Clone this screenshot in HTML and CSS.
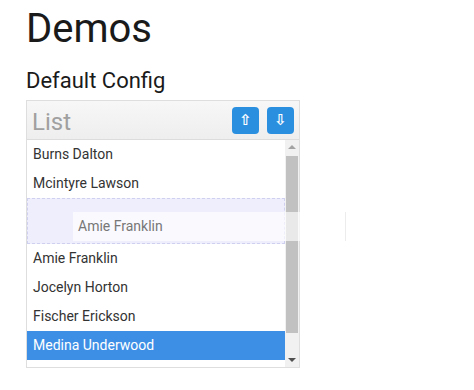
FILE: index.html
```html
<!DOCTYPE html>
<html>
<head>
<meta charset="utf-8">
<link rel="stylesheet" href="styles.css">
</head>
<body>
<h1 class="title">Demos</h1>
<h3 class="subtitle">Default Config</h3>
<div class="card">
  <div class="card-head">
    <span class="card-title">List</span>
    <div class="btns">
      <button class="btn">&#8679;</button>
      <button class="btn">&#8681;</button>
    </div>
  </div>
  <div class="card-body">
    <ul class="list">
      <li class="item">Burns Dalton</li>
      <li class="item">Mcintyre Lawson</li>
      <li class="placeholder"></li>
      <li class="item">Amie Franklin</li>
      <li class="item">Jocelyn Horton</li>
      <li class="item">Fischer Erickson</li>
      <li class="item selected">Medina Underwood</li>
    </ul>
    <div class="scrollbar">
      <div class="arrow up"></div>
      <div class="track"><div class="thumb"></div></div>
      <div class="arrow down"></div>
    </div>
  </div>
  <div class="ghost">Amie Franklin</div>
</div>
</body>
</html>
```
FILE: styles.css
```css
html, body { margin: 0; padding: 0; background: #fff; }
body {
  font-family: Roboto, "Liberation Sans", sans-serif;
  color: #222;
  padding: 0 0 0 26px;
}
.title {
  font-size: 40px;
  font-weight: 400;
  line-height: 50px;
  margin: 4px 0 0 0;
  color: #1a1a1a;
}
.subtitle {
  font-size: 22px;
  font-weight: 400;
  line-height: 28px;
  margin: 13px 0 0 0;
  color: #1a1a1a;
}
.card {
  position: relative;
  width: 272px;
  height: 266px;
  margin-top: 5px;
  border: 1px solid #dedede;
  display: flex;
  flex-direction: column;
}
.card-head {
  height: 38px;
  border-bottom: 1px solid #dcdcdc;
  background: linear-gradient(#f7f7f7, #eeeeee);
  display: flex;
  align-items: center;
  justify-content: space-between;
  padding: 0 5px 0 5px;
}
.card-title {
  font-size: 24px;
  color: #a0a0a0;
  line-height: 28px;
  margin-top: 4px;
}
.btns { display: flex; gap: 8px; }
.btn {
  width: 27px;
  height: 27px;
  border: 0;
  border-radius: 4px;
  background: #2b8fe0;
  color: #fff;
  font-family: "DejaVu Sans", sans-serif;
  font-size: 15px;
  font-weight: bold;
  padding: 0;
  display: flex;
  align-items: center;
  justify-content: center;
}
.card-body {
  flex: 1;
  display: flex;
  overflow: hidden;
}
.list {
  flex: 1;
  list-style: none;
  margin: 0;
  padding: 0;
  overflow: hidden;
}
.item {
  height: 29px;
  line-height: 29px;
  padding-left: 6px;
  font-size: 14px;
  color: #333;
  white-space: nowrap;
}
.item.selected {
  background: #3d8fe6;
  color: #fff;
}
.placeholder {
  height: 44px;
  border: 1px dashed #cfcfef;
  background: #eeeefc;
}
.scrollbar {
  width: 14px;
  background: #f1f1f1;
  display: flex;
  flex-direction: column;
}
.arrow {
  height: 14px;
  display: flex;
  align-items: center;
  justify-content: center;
}
.arrow.up::before {
  content: "";
  border-left: 4px solid transparent;
  border-right: 4px solid transparent;
  border-bottom: 4px solid #a3a3a3;
}
.arrow.down::before {
  content: "";
  border-left: 4px solid transparent;
  border-right: 4px solid transparent;
  border-top: 4px solid #505050;
}
.track {
  flex: 1;
  padding: 2px 1px 0 1px;
}
.thumb {
  height: 177px;
  background: #c1c1c1;
}
.ghost {
  position: absolute;
  left: 46px;
  top: 111px;
  width: 267px;
  height: 29px;
  line-height: 29px;
  padding-left: 5px;
  background: rgba(255, 255, 255, 0.65);
  border-right: 1px solid #ececec;
  font-size: 14px;
  color: #777;
  white-space: nowrap;
}
```
